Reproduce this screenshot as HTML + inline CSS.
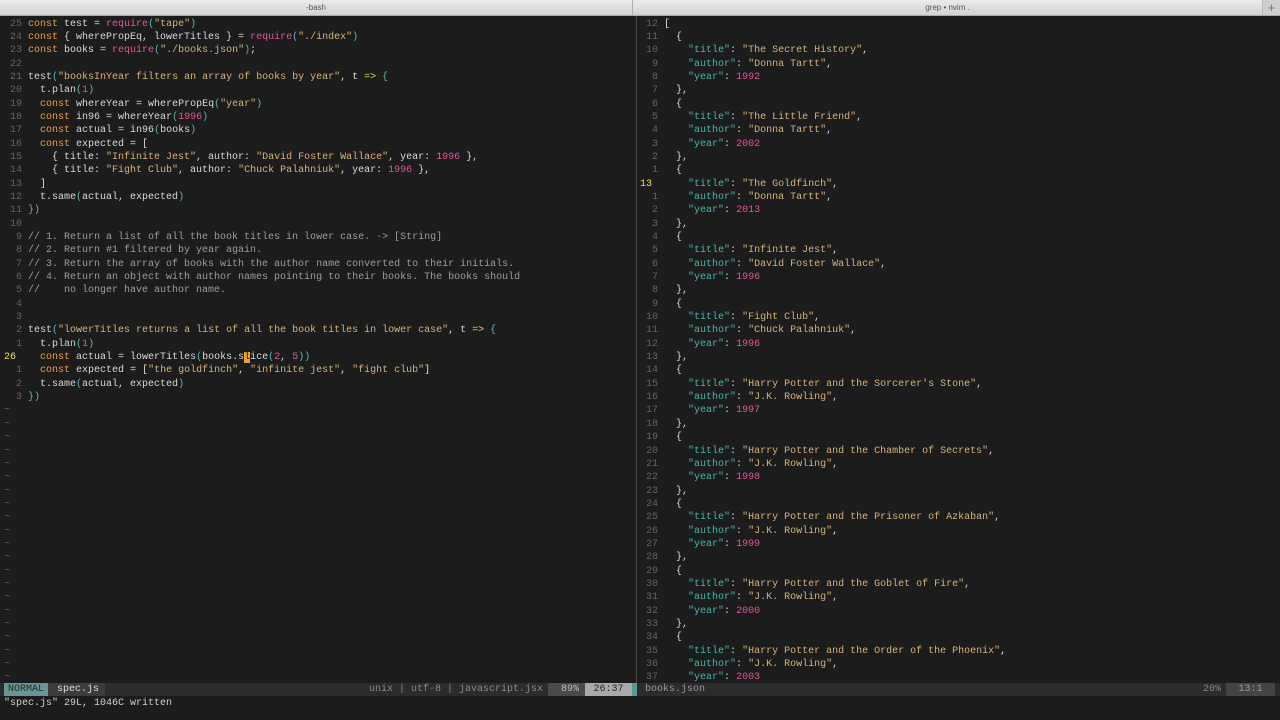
<!DOCTYPE html>
<html><head><meta charset="utf-8"><style>
*{margin:0;padding:0;box-sizing:border-box}
body{width:1280px;height:720px;background:#1c1c1c;overflow:hidden;position:relative;font-family:"Liberation Mono",monospace;font-size:10px;color:#d8d8d8}
.tb{position:absolute;top:0;height:16px;background:linear-gradient(#ececec,#d2d2d2);border-bottom:1px solid #a8a8a8;font-family:"Liberation Sans",sans-serif;font-size:8px;color:#555;text-align:center;line-height:15px}
.pane{position:absolute;top:17.5px;line-height:13.34px;white-space:pre}
.k{color:#eba040}.s{color:#d8b078}.n{color:#e0559a}.p{color:#5cb8b8}.c{color:#9c9c9c}.y{color:#d9d24a}.g{color:#646464}.cur{color:#e8e060}.key{color:#48b4ac}
.sb{position:absolute;top:683px;height:13px;line-height:13px;white-space:pre}
</style></head><body>
<div class="tb" style="left:0;width:632px">-bash</div>
<div class="tb" style="left:632px;width:630px;border-left:1px solid #b0b0b0">grep • nvim .</div>
<div class="tb" style="left:1262px;width:18px;background:#cfcfcf;font-size:13px;color:#777;border-left:1px solid #bbb">+</div>

<div class="pane" style="left:4px;width:628px"><span class="g"> 25 </span><span class="k">const</span> test = <span class="n">require</span><span class="p">(</span><span class="s">"tape"</span><span class="p">)</span>
<span class="g"> 24 </span><span class="k">const</span> { wherePropEq, lowerTitles } = <span class="n">require</span><span class="p">(</span><span class="s">"./index"</span><span class="p">)</span>
<span class="g"> 23 </span><span class="k">const</span> books = <span class="n">require</span><span class="p">(</span><span class="s">"./books.json"</span><span class="p">)</span>;
<span class="g"> 22 </span>
<span class="g"> 21 </span>test<span class="p">(</span><span class="s">"booksInYear filters an array of books by year"</span>, t <span class="y">=&gt;</span> <span class="p">{</span>
<span class="g"> 20 </span>  t.plan<span class="p">(</span><span class="n">1</span><span class="p">)</span>
<span class="g"> 19 </span>  <span class="k">const</span> whereYear = wherePropEq<span class="p">(</span><span class="s">"year"</span><span class="p">)</span>
<span class="g"> 18 </span>  <span class="k">const</span> in96 = whereYear<span class="p">(</span><span class="n">1996</span><span class="p">)</span>
<span class="g"> 17 </span>  <span class="k">const</span> actual = in96<span class="p">(</span>books<span class="p">)</span>
<span class="g"> 16 </span>  <span class="k">const</span> expected = [
<span class="g"> 15 </span>    { title: <span class="s">"Infinite Jest"</span>, author: <span class="s">"David Foster Wallace"</span>, year: <span class="n">1996</span> },
<span class="g"> 14 </span>    { title: <span class="s">"Fight Club"</span>, author: <span class="s">"Chuck Palahniuk"</span>, year: <span class="n">1996</span> },
<span class="g"> 13 </span>  ]
<span class="g"> 12 </span>  t.same<span class="p">(</span>actual, expected<span class="p">)</span>
<span class="g"> 11 </span><span class="p">})</span>
<span class="g"> 10 </span>
<span class="g">  9 </span><span class="c">// 1. Return a list of all the book titles in lower case. -&gt; [String]</span>
<span class="g">  8 </span><span class="c">// 2. Return #1 filtered by year again.</span>
<span class="g">  7 </span><span class="c">// 3. Return the array of books with the author name converted to their initials.</span>
<span class="g">  6 </span><span class="c">// 4. Return an object with author names pointing to their books. The books should</span>
<span class="g">  5 </span><span class="c">//    no longer have author name.</span>
<span class="g">  4 </span>
<span class="g">  3 </span>
<span class="g">  2 </span>test<span class="p">(</span><span class="s">"lowerTitles returns a list of all the book titles in lower case"</span>, t <span class="y">=&gt;</span> <span class="p">{</span>
<span class="g">  1 </span>  t.plan<span class="p">(</span><span class="n">1</span><span class="p">)</span>
<span class="cur">26  </span>  <span class="k">const</span> actual = lowerTitles<span class="p">(</span>books.s<span style="background:#e8a030;color:#1c1c1c">l</span>ice<span class="p">(</span><span class="n">2</span>, <span class="n">5</span><span class="p">))</span>
<span class="g">  1 </span>  <span class="k">const</span> expected = [<span class="s">"the goldfinch"</span>, <span class="s">"infinite jest"</span>, <span class="s">"fight club"</span>]
<span class="g">  2 </span>  t.same<span class="p">(</span>actual, expected<span class="p">)</span>
<span class="g">  3 </span><span class="p">})</span>
<span class="g">~
~
~
~
~
~
~
~
~
~
~
~
~
~
~
~
~
~
~
~
~</span></div>

<div style="position:absolute;left:636px;top:16px;width:1px;height:667px;background:#4a4a4a"></div>
<div class="pane" style="left:640px;width:640px"><span class="g"> 12 </span>[
<span class="g"> 11 </span>  {
<span class="g"> 10 </span>    <span class="key">"title"</span>: <span class="s">"The Secret History"</span>,
<span class="g">  9 </span>    <span class="key">"author"</span>: <span class="s">"Donna Tartt"</span>,
<span class="g">  8 </span>    <span class="key">"year"</span>: <span class="n">1992</span>
<span class="g">  7 </span>  },
<span class="g">  6 </span>  {
<span class="g">  5 </span>    <span class="key">"title"</span>: <span class="s">"The Little Friend"</span>,
<span class="g">  4 </span>    <span class="key">"author"</span>: <span class="s">"Donna Tartt"</span>,
<span class="g">  3 </span>    <span class="key">"year"</span>: <span class="n">2002</span>
<span class="g">  2 </span>  },
<span class="g">  1 </span>  {
<span class="cur">13  </span>    <span class="key">"title"</span>: <span class="s">"The Goldfinch"</span>,
<span class="g">  1 </span>    <span class="key">"author"</span>: <span class="s">"Donna Tartt"</span>,
<span class="g">  2 </span>    <span class="key">"year"</span>: <span class="n">2013</span>
<span class="g">  3 </span>  },
<span class="g">  4 </span>  {
<span class="g">  5 </span>    <span class="key">"title"</span>: <span class="s">"Infinite Jest"</span>,
<span class="g">  6 </span>    <span class="key">"author"</span>: <span class="s">"David Foster Wallace"</span>,
<span class="g">  7 </span>    <span class="key">"year"</span>: <span class="n">1996</span>
<span class="g">  8 </span>  },
<span class="g">  9 </span>  {
<span class="g"> 10 </span>    <span class="key">"title"</span>: <span class="s">"Fight Club"</span>,
<span class="g"> 11 </span>    <span class="key">"author"</span>: <span class="s">"Chuck Palahniuk"</span>,
<span class="g"> 12 </span>    <span class="key">"year"</span>: <span class="n">1996</span>
<span class="g"> 13 </span>  },
<span class="g"> 14 </span>  {
<span class="g"> 15 </span>    <span class="key">"title"</span>: <span class="s">"Harry Potter and the Sorcerer's Stone"</span>,
<span class="g"> 16 </span>    <span class="key">"author"</span>: <span class="s">"J.K. Rowling"</span>,
<span class="g"> 17 </span>    <span class="key">"year"</span>: <span class="n">1997</span>
<span class="g"> 18 </span>  },
<span class="g"> 19 </span>  {
<span class="g"> 20 </span>    <span class="key">"title"</span>: <span class="s">"Harry Potter and the Chamber of Secrets"</span>,
<span class="g"> 21 </span>    <span class="key">"author"</span>: <span class="s">"J.K. Rowling"</span>,
<span class="g"> 22 </span>    <span class="key">"year"</span>: <span class="n">1998</span>
<span class="g"> 23 </span>  },
<span class="g"> 24 </span>  {
<span class="g"> 25 </span>    <span class="key">"title"</span>: <span class="s">"Harry Potter and the Prisoner of Azkaban"</span>,
<span class="g"> 26 </span>    <span class="key">"author"</span>: <span class="s">"J.K. Rowling"</span>,
<span class="g"> 27 </span>    <span class="key">"year"</span>: <span class="n">1999</span>
<span class="g"> 28 </span>  },
<span class="g"> 29 </span>  {
<span class="g"> 30 </span>    <span class="key">"title"</span>: <span class="s">"Harry Potter and the Goblet of Fire"</span>,
<span class="g"> 31 </span>    <span class="key">"author"</span>: <span class="s">"J.K. Rowling"</span>,
<span class="g"> 32 </span>    <span class="key">"year"</span>: <span class="n">2000</span>
<span class="g"> 33 </span>  },
<span class="g"> 34 </span>  {
<span class="g"> 35 </span>    <span class="key">"title"</span>: <span class="s">"Harry Potter and the Order of the Phoenix"</span>,
<span class="g"> 36 </span>    <span class="key">"author"</span>: <span class="s">"J.K. Rowling"</span>,
<span class="g"> 37 </span>    <span class="key">"year"</span>: <span class="n">2003</span></div>

<div class="sb" style="left:0;width:1280px;background:#2c2c2c"></div>
<div class="sb" style="left:4px;width:44px;background:#6a9595;color:#1d2a2a;padding-left:4px">NORMAL</div>
<div class="sb" style="left:48px;width:57px;background:#3c3c3c;color:#ddd;padding-left:9px">spec.js</div>
<div class="sb" style="left:369px;color:#8a8a8a">unix | utf-8 | javascript.jsx</div>
<div class="sb" style="left:548px;width:37px;background:#4a4a4a;color:#bbb;text-align:right;padding-right:6px">89%</div>
<div class="sb" style="left:585px;width:47px;background:#a9a9a9;color:#2a2a2a;text-align:center">26:37</div>
<div class="sb" style="left:632px;width:5px;background:#5a9898"></div>
<div class="sb" style="left:645px;color:#9a9a9a">books.json</div>
<div class="sb" style="left:1203px;color:#888">20%</div>
<div class="sb" style="left:1226px;width:49px;background:#444;color:#999;text-align:center">13:1</div>
<div style="position:absolute;left:4px;top:697px;line-height:13px;white-space:pre;color:#d0d0d0">"spec.js" 29L, 1046C written</div>
</body></html>
